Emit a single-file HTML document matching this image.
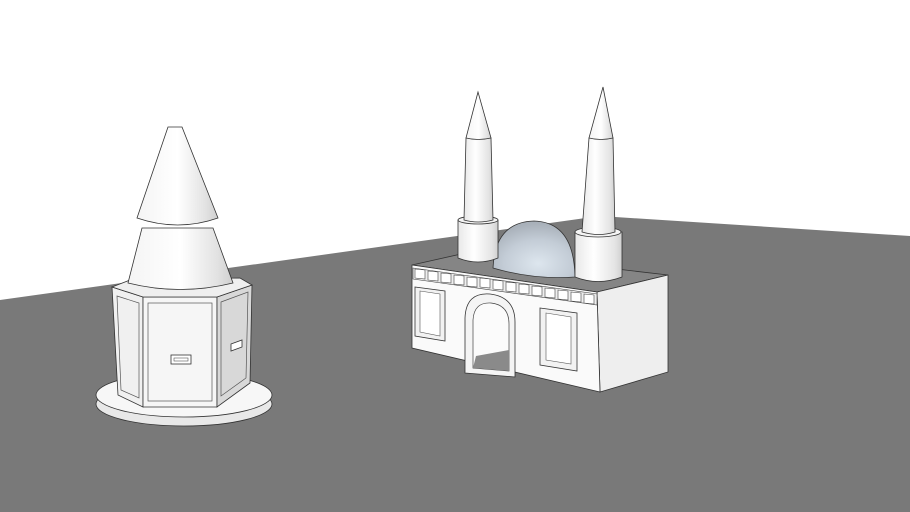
<!DOCTYPE html>
<html><head><meta charset="utf-8"><style>html,body{margin:0;padding:0;background:#fff}svg{display:block}</style></head>
<body>
<svg width="910" height="512" viewBox="0 0 910 512" xmlns="http://www.w3.org/2000/svg">
<defs>
<linearGradient id="cone" x1="0" x2="1" y1="0" y2="0">
<stop offset="0" stop-color="#f4f4f4"/><stop offset="0.5" stop-color="#ffffff"/><stop offset="0.85" stop-color="#e2e2e2"/><stop offset="1" stop-color="#cfcfcf"/></linearGradient>
<linearGradient id="cyl" x1="0" x2="1" y1="0" y2="0">
<stop offset="0" stop-color="#e8e8e8"/><stop offset="0.4" stop-color="#ffffff"/><stop offset="0.85" stop-color="#e4e4e4"/><stop offset="1" stop-color="#d0d0d0"/></linearGradient>
<radialGradient id="dome" cx="0.55" cy="0.75" r="0.7">
<stop offset="0" stop-color="#dde6ee"/><stop offset="0.6" stop-color="#c3ccd6"/><stop offset="1" stop-color="#a9b1ba"/></radialGradient>
</defs>
<rect width="910" height="512" fill="#fff"/>
<polygon points="0,300 600,216 910,236 910,512 0,512" fill="#797979"/>

<ellipse cx="184" cy="404" rx="88" ry="22" fill="#e8e8e8" stroke="#333" stroke-width="0.8"/>
<ellipse cx="184" cy="395" rx="88" ry="22" fill="#f7f7f7" stroke="#333" stroke-width="0.8"/>
<polygon points="112,287 143,297 143,407 118,395" fill="#f0f0f0" stroke="#333" stroke-width="0.8"/>
<polygon points="143,297 217,297 217,407 143,407" fill="#f6f6f6" stroke="#333" stroke-width="0.8"/>
<polygon points="217,297 252,285 250,383 217,407" fill="#d8d8d8" stroke="#333" stroke-width="0.8"/>
<polygon points="112,287 130,280 240,278 252,285 217,297 143,297" fill="#efefef" stroke="#333" stroke-width="0.8"/>
<polygon points="117,296 139,303 139,398 121,390" fill="none" stroke="#555" stroke-width="0.7"/>
<rect x="148" y="303" width="64" height="98" fill="none" stroke="#555" stroke-width="0.7"/>
<polygon points="221,302 248,292 246,378 221,396" fill="none" stroke="#555" stroke-width="0.7"/>
<rect x="171" y="355" width="20" height="9" fill="#fff" stroke="#333" stroke-width="0.8"/>
<rect x="174" y="358" width="14" height="3" fill="none" stroke="#555" stroke-width="0.6"/>
<polygon points="231,344 242,340 242,347 231,351" fill="#fff" stroke="#333" stroke-width="0.8"/>
<path d="M142,228 L213,228 L233,283 Q180,296 128,283 Z" fill="url(#cone)" stroke="#333" stroke-width="0.8"/>
<path d="M168,127 L182,127 L218,218 Q178,232 137,218 Z" fill="url(#cone)" stroke="#333" stroke-width="0.8"/>

<polygon points="412,265 470,252 668,275 597,292" fill="#858585" stroke="#333" stroke-width="0.8"/>
<polygon points="597,292 668,275 668,372 600,392" fill="#eeeeee" stroke="#333" stroke-width="0.8"/>
<polygon points="412,265 597,292 600,392 412,348" fill="#fafafa" stroke="#333" stroke-width="0.8"/>
<polygon points="413,268 597,294 597,305 413,279" fill="#eee" stroke="#444" stroke-width="0.6"/>
<g stroke="#444" stroke-width="0.6" fill="#fff">
<polygon points="415,269 425,270 425,279 415,278"/>
<polygon points="428,271 438,272 438,281 428,280"/>
<polygon points="441,273 451,274 451,283 441,282"/>
<polygon points="454,275 464,276 464,285 454,284"/>
<polygon points="467,277 477,278 477,287 467,286"/>
<polygon points="480,278 490,279 490,288 480,287"/>
<polygon points="493,280 503,281 503,290 493,289"/>
<polygon points="506,282 516,283 516,292 506,291"/>
<polygon points="519,284 529,285 529,294 519,293"/>
<polygon points="532,286 542,287 542,296 532,295"/>
<polygon points="545,288 555,289 555,298 545,297"/>
<polygon points="558,290 568,291 568,300 558,299"/>
<polygon points="571,292 581,293 581,302 571,301"/>
<polygon points="584,294 594,295 594,304 584,303"/>
</g>
<polygon points="415,287 445,291 445,341 415,336" fill="#f2f2f2" stroke="#333" stroke-width="0.8"/>
<polygon points="420,291 440,294 440,336 420,332" fill="#fff" stroke="#555" stroke-width="0.6"/>
<polygon points="540,308 577,313 577,371 540,365" fill="#f2f2f2" stroke="#333" stroke-width="0.8"/>
<polygon points="546,313 571,317 571,364 546,360" fill="#fff" stroke="#555" stroke-width="0.6"/>
<path d="M465,373 L465,318 Q466,292 490,294 Q515,297 515,322 L515,377 Z" fill="#f4f4f4" stroke="#333" stroke-width="0.8"/>
<path d="M473,368 L473,320 Q474,302 491,303 Q509,305 509,324 L509,371 Z" fill="#fbfbfb" stroke="#444" stroke-width="0.7"/>
<polygon points="476,356 509,350 509,371 473,368" fill="#8a8a8a"/>
<path d="M493,268 Q495,222 534,221 Q574,222 575,277 Q534,280 493,268 Z" fill="url(#dome)" stroke="#333" stroke-width="0.8"/>
<path d="M458,220 L458,258 Q478,266 498,258 L498,220 Z" fill="url(#cyl)" stroke="#333" stroke-width="0.8"/>
<ellipse cx="478" cy="220" rx="20" ry="4" fill="#f4f4f4" stroke="#333" stroke-width="0.8"/>
<path d="M466,138 L464,220 Q478,224 493,220 L491,138 Z" fill="url(#cyl)" stroke="#333" stroke-width="0.8"/>
<path d="M478,92 L466,138 Q478,141 491,138 Z" fill="url(#cone)" stroke="#333" stroke-width="0.8"/>
<path d="M575,232 L575,277 Q598,286 622,277 L622,232 Z" fill="url(#cyl)" stroke="#333" stroke-width="0.8"/>
<ellipse cx="598" cy="232" rx="23" ry="5" fill="#f4f4f4" stroke="#333" stroke-width="0.8"/>
<path d="M589,138 L582,232 Q599,237 615,232 L613,138 Z" fill="url(#cyl)" stroke="#333" stroke-width="0.8"/>
<path d="M603,87 L589,138 Q601,141 613,138 Z" fill="url(#cone)" stroke="#333" stroke-width="0.8"/>
</svg>
</body></html>
